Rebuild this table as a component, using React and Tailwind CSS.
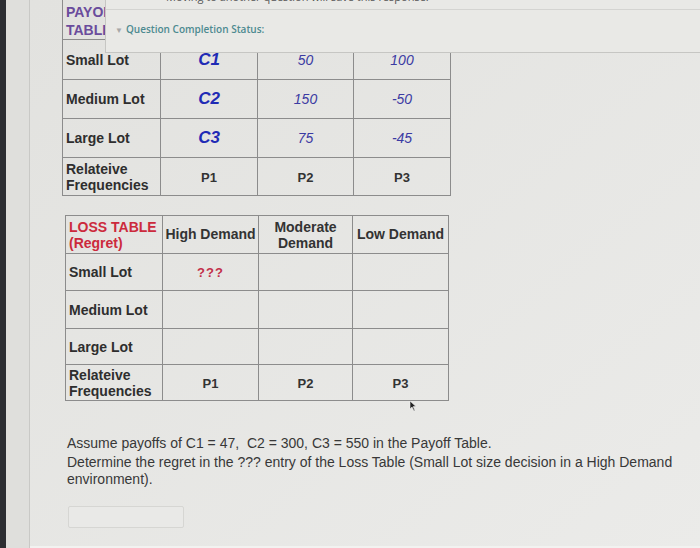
const label = "border border-[#8c8c8c] px-[3px] text-left font-bold text-[14px] leading-[16px] text-[#2e2e2e]";
const cell = "border border-[#8c8c8c] text-center";
const payoffNum = "italic text-[14px] text-[#3b3ba3]";
const choice = "italic font-bold text-[17px] text-[#1f2bb5]";
const prob = "font-bold text-[13px] text-[#333]";

const payoffRows = [
  { name: "Small Lot", c: "C1", a: "50", b: "100", h: "h-[40px]" },
  { name: "Medium Lot", c: "C2", a: "150", b: "-50", h: "h-[39px]" },
  { name: "Large Lot", c: "C3", a: "75", b: "-45", h: "h-[39px]" },
];

export default function App() {
  return (
    <div className="flex h-[548px] w-[700px] overflow-hidden bg-[#e6e6e3] font-['Liberation_Sans',Arial,sans-serif]">
      <div className="w-[6px] shrink-0 bg-[#2c2e32]" />
      <div className="w-[24px] shrink-0 border-r border-[#c9c9c6] bg-[#dfdfdc]" />

      <div className="relative flex-1 bg-linear-to-br from-[#e2e2df] to-[#ebebe9]">
        {/* payoff table */}
        <table className="ml-[32px] mt-[-3px] w-[388px] table-fixed border-collapse">
          <colgroup>
            <col className="w-[98px]" />
            <col className="w-[97px]" />
            <col className="w-[96px]" />
            <col className="w-[97px]" />
          </colgroup>
          <tbody>
            <tr className="h-[42px]">
              <td className={label + " !text-[#6a4c9c] pt-[4px] leading-[18px]"}>
                PAYOFF
                <br />
                TABLE
              </td>
              <td className={cell} />
              <td className={cell} />
              <td className={cell} />
            </tr>
            {payoffRows.map((r) => (
              <tr key={r.name} className={r.h}>
                <td className={label}>{r.name}</td>
                <td className={cell}>
                  <span className={choice}>{r.c}</span>
                </td>
                <td className={cell}>
                  <span className={payoffNum}>{r.a}</span>
                </td>
                <td className={cell}>
                  <span className={payoffNum}>{r.b}</span>
                </td>
              </tr>
            ))}
            <tr className="h-[38px]">
              <td className={label}>
                Relateive
                <br />
                Frequencies
              </td>
              <td className={cell}>
                <span className={prob}>P1</span>
              </td>
              <td className={cell}>
                <span className={prob}>P2</span>
              </td>
              <td className={cell}>
                <span className={prob}>P3</span>
              </td>
            </tr>
          </tbody>
        </table>

        {/* loss table */}
        <table className="ml-[35px] mt-[19px] w-[383px] table-fixed border-collapse">
          <colgroup>
            <col className="w-[97px]" />
            <col className="w-[96px]" />
            <col className="w-[94px]" />
            <col className="w-[96px]" />
          </colgroup>
          <tbody>
            <tr className="h-[38px]">
              <td className={label + " !text-[#cc2a3c]"}>
                LOSS TABLE
                <br />
                (Regret)
              </td>
              <td className={cell + " font-bold text-[14px] text-[#333]"}>High Demand</td>
              <td className={cell + " font-bold text-[14px] leading-[16px] text-[#333]"}>
                Moderate
                <br />
                Demand
              </td>
              <td className={cell + " font-bold text-[14px] text-[#333]"}>Low Demand</td>
            </tr>
            <tr className="h-[37px]">
              <td className={label}>Small Lot</td>
              <td className={cell}>
                <span className="font-bold text-[13px] tracking-[1px] text-[#c33049]">???</span>
              </td>
              <td className={cell} />
              <td className={cell} />
            </tr>
            <tr className="h-[38px]">
              <td className={label}>Medium Lot</td>
              <td className={cell} />
              <td className={cell} />
              <td className={cell} />
            </tr>
            <tr className="h-[36px]">
              <td className={label}>Large Lot</td>
              <td className={cell} />
              <td className={cell} />
              <td className={cell} />
            </tr>
            <tr className="h-[36px]">
              <td className={label}>
                Relateive
                <br />
                Frequencies
              </td>
              <td className={cell}>
                <span className={prob}>P1</span>
              </td>
              <td className={cell}>
                <span className={prob}>P2</span>
              </td>
              <td className={cell}>
                <span className={prob}>P3</span>
              </td>
            </tr>
          </tbody>
        </table>

        {/* question text */}
        <div className="ml-[37px] mt-[32px] text-[14px] text-[#383838]">
          <p className="leading-[20px]">
            Assume payoffs of C1 = 47,&nbsp; C2 = 300, C3 = 550 in the Payoff Table.
          </p>
          <p className="mt-[1px] pr-[10px] leading-[17px]">
            Determine the regret in the ??? entry of the Loss Table (Small Lot size decision in a High Demand
            environment).
          </p>
        </div>

        <input
          type="text"
          className="ml-[38px] mt-[18px] block h-[22px] w-[116px] rounded-[2px] border border-[#d6d6d3] bg-[#e9e9e7]"
        />

        {/* sticky status bar over the top */}
        <div className="absolute left-[75px] right-0 top-0 h-[53px] overflow-hidden border-b border-l border-[#c6c6c3] bg-[#e9e9e6]">
          <div className="absolute left-[60px] top-[-11px] whitespace-nowrap font-['Open_Sans',sans-serif] text-[11px] text-[#555]">
            Moving to another question will save this response.
          </div>
          <div className="mt-[9px] border-t border-[#d4d4d1]" />
          <div className="mt-[12px] flex items-center gap-[3px] pl-[9px] font-['Open_Sans',sans-serif] text-[10px] font-semibold text-[#4d8a90]">
            <span className="text-[8px] text-[#a8a8a8]">▼</span>
            <span>Question Completion Status:</span>
          </div>
        </div>

        {/* mouse pointer */}
        <svg className="absolute left-[379px] top-[400px]" width="8" height="12" viewBox="0 0 8 12">
          <path d="M1 1 L1 9 L3 7 L5 11 L6 10.5 L4.2 6.6 L7 6.6 Z" fill="#222" stroke="#eee" strokeWidth="0.6" />
        </svg>

        <div className="absolute bottom-0 left-0 right-0 h-[2px] bg-[#f2f2f0]" />
      </div>
    </div>
  );
}
